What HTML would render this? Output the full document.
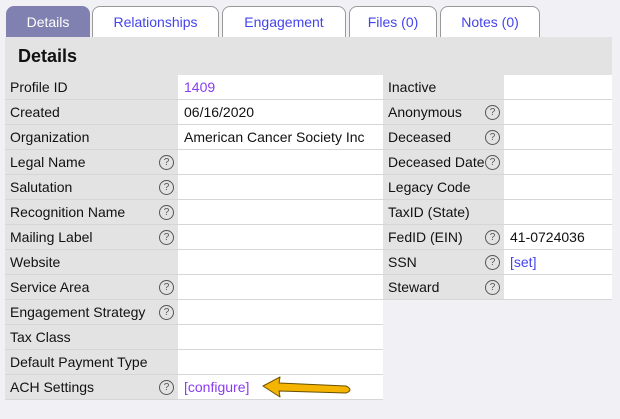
<!DOCTYPE html><html><head><style>
body{margin:0;width:620px;height:419px;background:#f0f0f5;font-family:"Liberation Sans",sans-serif;position:relative;overflow:hidden;color:#111}
.tab{position:absolute;top:6px;height:31px;border:1px solid #999;border-bottom:none;border-radius:8px 8px 0 0;background:#fff;color:#4444ee;font-size:14px;text-align:center;line-height:31px;box-sizing:border-box}
.tab.a{background:#8181b1;color:#fff;border-color:#8181b1}
.hdr{position:absolute;left:5px;top:37px;width:607px;height:38px;background:#e3e3e3}
.hdr b{position:absolute;left:13px;top:9px;font-size:18px}
.r{position:absolute;height:25px;box-sizing:border-box;border-bottom:1px solid #d6d6d6;font-size:14px;line-height:25px}
.l{background:#e3e3e3;padding-left:5px}
.v{background:#fff;padding-left:6px}
.q{position:absolute;width:13px;height:13px;border:1px solid #555;border-radius:50%;font-size:10px;line-height:13px;text-align:center;color:#555;top:5px}
a{color:#8a3cf0;text-decoration:none}
.b{color:#4444ee}
</style></head><body>
<div class="tab a" style="left:6px;width:84px">Details</div>
<div class="tab" style="left:92px;width:127px">Relationships</div>
<div class="tab" style="left:222px;width:124px">Engagement</div>
<div class="tab" style="left:349px;width:88px">Files (0)</div>
<div class="tab" style="left:440px;width:100px">Notes (0)</div>
<div class="hdr"><b>Details</b></div>
<div id="t"></div>
<svg style="position:absolute;left:258px;top:374px" width="100" height="26"><path d="M5 12 L22 3 L21 9 L88 12 Q96 16 88 19 L21 17 L22 23 Z" fill="#f5b400" stroke="#6a5000" stroke-width="1" stroke-linejoin="round"/></svg>
<script>
var L=[["Profile ID",0,'<a>1409</a>'],["Created",0,"06/16/2020"],["Organization",0,"American Cancer Society Inc"],["Legal Name",1,""],["Salutation",1,""],["Recognition Name",1,""],["Mailing Label",1,""],["Website",0,""],["Service Area",1,""],["Engagement Strategy",1,""],["Tax Class",0,""],["Default Payment Type",0,""],["ACH Settings",1,'<a>[configure]</a>']];
var R=[["Inactive",0,""],["Anonymous",1,""],["Deceased",1,""],["Deceased Date",1,""],["Legacy Code",0,""],["TaxID (State)",0,""],["FedID (EIN)",1,"41-0724036"],["SSN",1,'<span class="b">[set]</span>'],["Steward",1,""]];
var h="";
function add(a,lx,lw,vw){a.forEach(function(e,i){var y=75+i*25;h+='<div class="r l" style="left:'+lx+'px;top:'+y+'px;width:'+lw+'px">'+e[0]+(e[1]?'<span class="q" style="left:'+(lw-19)+'px">?</span>':'')+'</div><div class="r v" style="left:'+(lx+lw)+'px;top:'+y+'px;width:'+vw+'px">'+e[2]+'</div>';});}
add(L,5,173,205);add(R,383,121,108);
document.getElementById("t").innerHTML=h;
</script>
</body></html>
